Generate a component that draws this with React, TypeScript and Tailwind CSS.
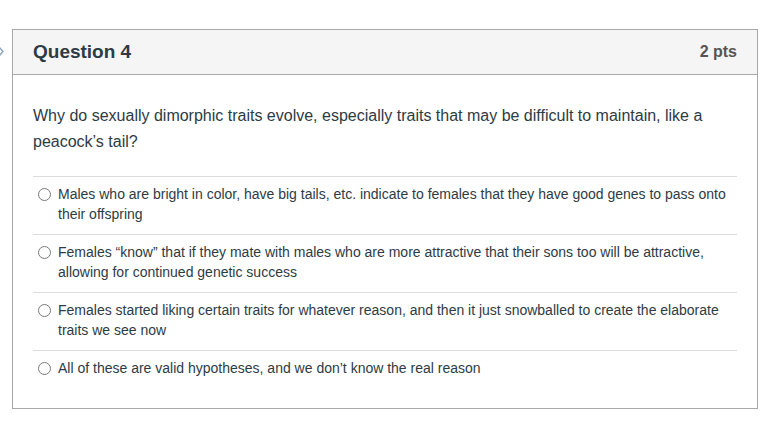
import React from 'react';

const answers = [
  'Males who are bright in color, have big tails, etc. indicate to females that they have good genes to pass onto their offspring',
  'Females \u201cknow\u201d that if they mate with males who are more attractive that their sons too will be attractive, allowing for continued genetic success',
  'Females started liking certain traits for whatever reason, and then it just snowballed to create the elaborate traits we see now',
  'All of these are valid hypotheses, and we don\u2019t know the real reason',
];

const Radio: React.FC = () => (
  <span className="mt-[4px] block size-[13px] shrink-0 rounded-full border border-[#7a7a7a] bg-white" />
);

export default function App() {
  return (
    <div className="relative h-[425px] w-[766px] bg-white font-['Liberation_Sans',Arial,sans-serif] text-[#2d3b45]">
      <svg className="absolute left-[-2px] top-[46px]" width="8" height="11" viewBox="0 0 8 11">
        <path d="M1 1 L5 5.5 L1 10" fill="none" stroke="#8fa6be" strokeWidth="1.5" />
      </svg>
      <div className="pl-[12px] pt-[29px] pr-[8px]">
        <div className="border border-[#a8a8a8]">
          <div className="flex h-[45px] items-center justify-between border-b border-[#a8a8a8] bg-[#f5f5f5] px-[20px]">
            <span className="text-[19px] font-bold">Question 4</span>
            <span className="text-[16px] font-bold text-[#555]">2 pts</span>
          </div>
          <div className="px-[20px] pb-[20px] pt-[28px]">
            <p className="text-[16px] leading-[26px]">
              Why do sexually dimorphic traits evolve, especially traits that may be difficult to maintain, like a peacock’s tail?
            </p>
            <div className="mt-[21px]">
              {answers.map((a, i) => (
                <div key={i} className="flex gap-[7px] border-t border-[#dcdcdc] pb-[10px] pl-[5px] pr-[8px] pt-[7px] text-[14px] leading-[20px]">
                  <Radio />
                  <span>{a}</span>
                </div>
              ))}
            </div>
          </div>
        </div>
      </div>
    </div>
  );
}
